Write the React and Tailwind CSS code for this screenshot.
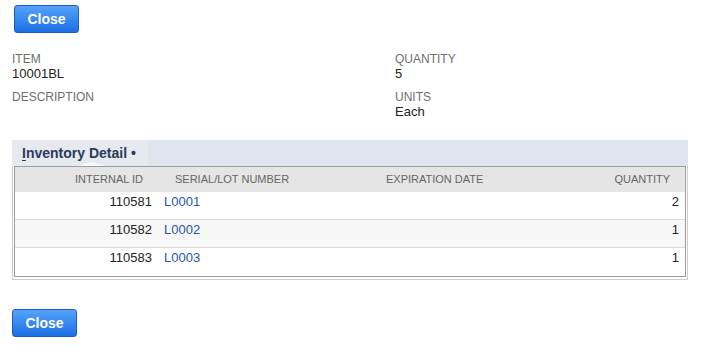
import React from "react";

const rows = [
  { id: "110581", lot: "L0001", exp: "", qty: "2" },
  { id: "110582", lot: "L0002", exp: "", qty: "1" },
  { id: "110583", lot: "L0003", exp: "", qty: "1" },
];

const CloseButton = ({ className }) => (
  <button
    type="button"
    className={`h-[28px] w-[65px] rounded-[3px] border border-[#1c5fc4] bg-gradient-to-b from-[#55a2fb] to-[#1a6fe4] text-[14px] font-bold text-white leading-none ${className}`}
  >
    Close
  </button>
);

const Field = ({ label, value }) => (
  <div className="mb-2">
    <div className="text-[12px] leading-[14px] text-[#6f6f6f]">{label}</div>
    {value && <div className="text-[13px] leading-[16px] text-[#222]">{value}</div>}
  </div>
);

const App = () => {
  return (
    <div className="w-[705px] h-[350px] bg-white font-['Liberation_Sans',Arial,sans-serif] overflow-hidden">
      <div className="pt-[5px] pl-[14px]">
        <CloseButton />
      </div>

      {/* main fields */}
      <div className="flex mt-[19px] px-[12px]">
        <div className="w-[383px]">
          <Field label="ITEM" value="10001BL" />
          <Field label="DESCRIPTION" />
        </div>
        <div>
          <Field label="QUANTITY" value="5" />
          <Field label="UNITS" value="Each" />
        </div>
      </div>

      {/* inventory detail sublist */}
      <div className="ml-[12px] mt-[12px] w-[676px]">
        <div className="h-[26px] bg-[#dfe5ee] flex">
          <div className="relative w-[136px] bg-[#e6e9ee] pl-[10px] pt-[5px] text-[14px] font-bold leading-[16px] text-[#2a3a5c]">
            <span className="underline underline-offset-2">I</span>nventory Detail •
            <span className="absolute bottom-0 left-[68px] w-0 h-0 border-l-[12px] border-r-[12px] border-b-[4px] border-l-transparent border-r-transparent border-b-white"></span>
          </div>
        </div>
        <div className="border border-t-0 border-[#cfcfcf] px-[1px] pb-[2px]">
          <div className="border border-[#9c9c9c]">
            <div className="flex h-[25px] items-center bg-[#e5e5e5] text-[11px] text-[#666]">
              <div className="w-[142px] text-right pr-[14px]">INTERNAL ID</div>
              <div className="w-[212px] pl-[18px]">SERIAL/LOT NUMBER</div>
              <div className="w-[200px] pl-[17px]">EXPIRATION DATE</div>
              <div className="flex-1 text-right pr-[15px]">QUANTITY</div>
            </div>
            {rows.map((r, i) => (
              <div
                key={r.id}
                className={`flex h-[28px] pt-[2px] text-[13px] leading-[16px] text-[#222] ${
                  i < rows.length - 1 ? "border-b border-[#dcdcdc]" : ""
                } ${i === 1 ? "bg-[#f7f7f7]" : "bg-white"}`}
              >
                <div className="w-[142px] text-right pr-[5px]">{r.id}</div>
                <div className="w-[212px] pl-[7px] text-[#2656a8]">{r.lot}</div>
                <div className="w-[200px] pl-[17px]">{r.exp}</div>
                <div className="flex-1 text-right pr-[6px]">{r.qty}</div>
              </div>
            ))}
          </div>
        </div>
      </div>

      <div className="pl-[12px] mt-[29px]">
        <CloseButton />
      </div>
    </div>
  );
};

export default App;
